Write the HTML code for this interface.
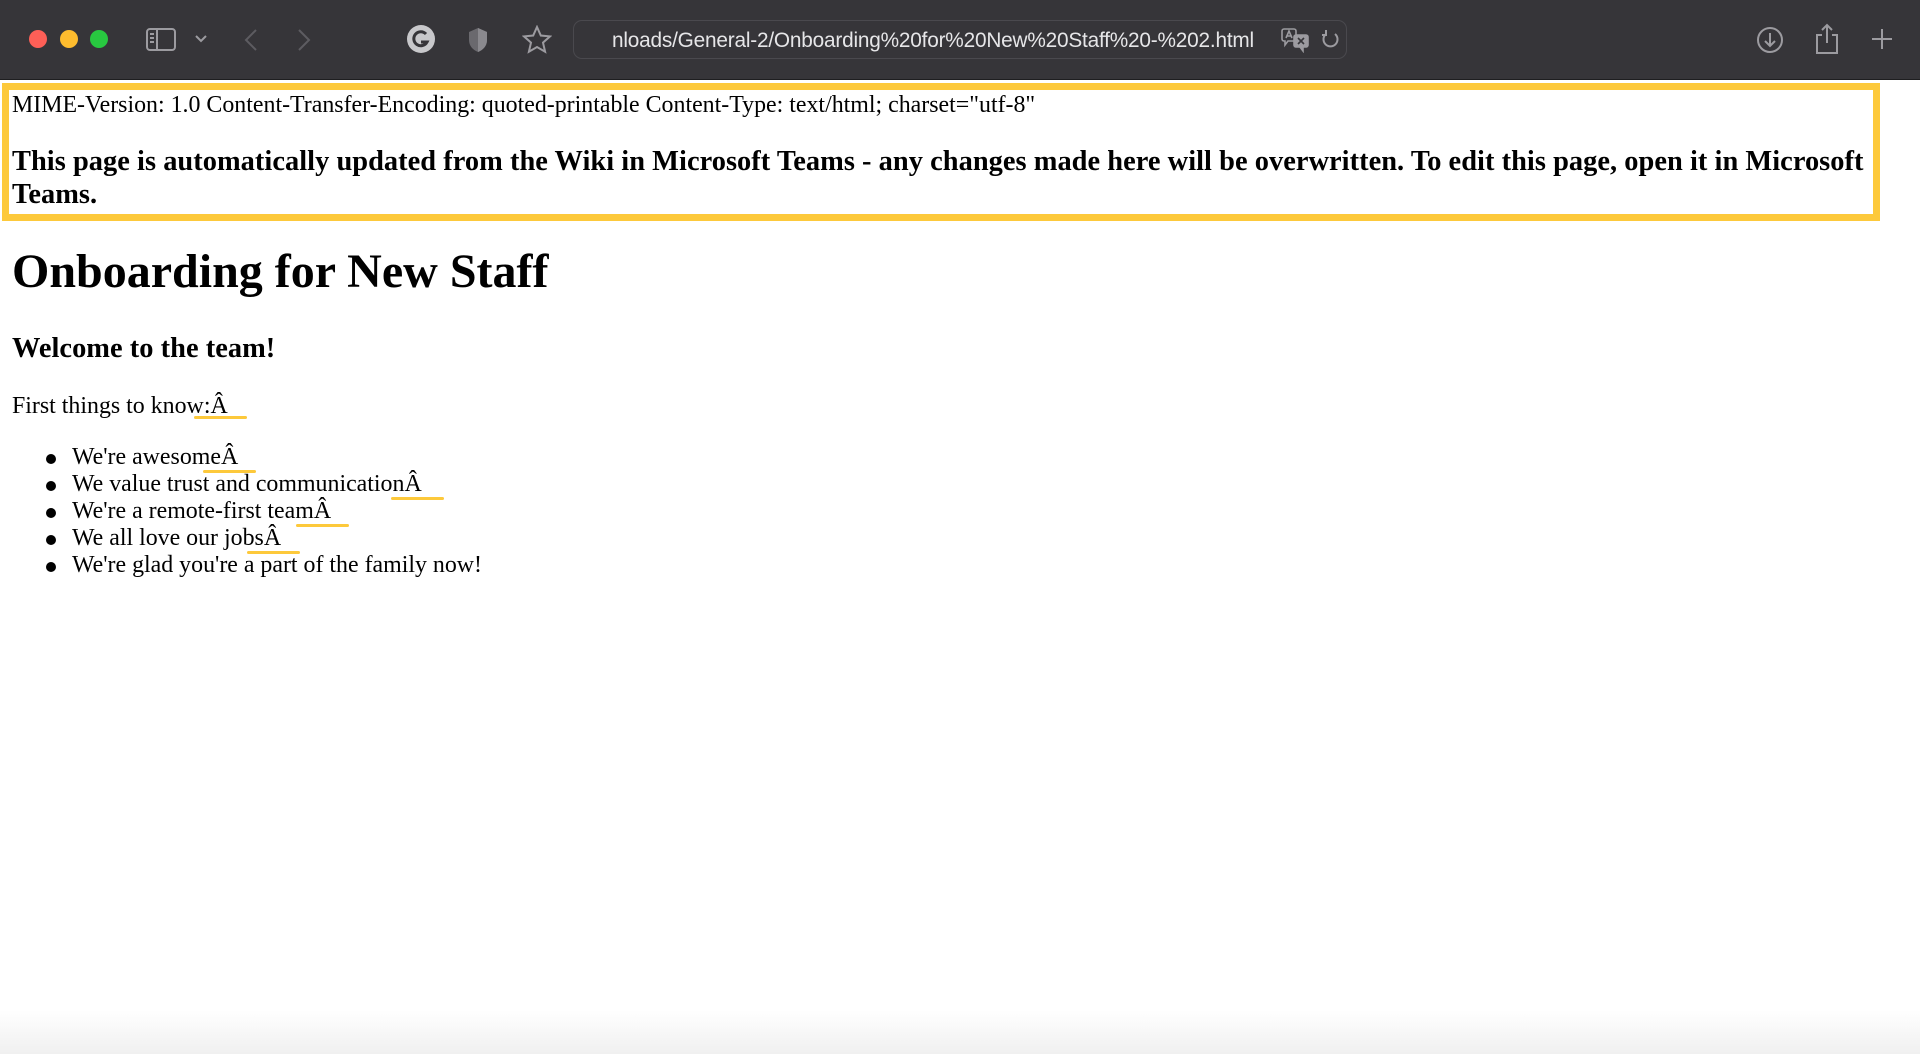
<!DOCTYPE html>
<html><head><meta charset="utf-8"><style>
*{margin:0;padding:0;box-sizing:border-box}
html,body{width:1920px;height:1054px;overflow:hidden;background:#fff}
body{position:relative;font-family:"Liberation Serif",serif;color:#000}
.bar{position:absolute;left:0;top:0;width:1920px;height:80px;background:#363539;border-bottom:1px solid #1e1e20}
.dot{position:absolute;top:30px;width:18px;height:18px;border-radius:50%}
.url{position:absolute;left:573px;top:20px;width:774px;height:39px;border:1px solid #4a494e;border-radius:9px;background:#363539}
.url span{position:absolute;left:38px;top:8px;font:20.8px "Liberation Sans",sans-serif;color:#e6e6e8;white-space:nowrap;letter-spacing:-0.2px}
.ic{position:absolute;stroke:#9c9ba0;fill:none;stroke-width:2}
.box{position:absolute;left:2px;top:83px;width:1878px;height:138px;border:7px solid #fdc93b}
.t{position:absolute;white-space:nowrap;line-height:1}
.ul{position:absolute;height:3px;background:#fdc93b;border-radius:2px;width:53px}
.b{position:absolute;left:46px;width:10px;height:10px;border-radius:50%;background:#000}
.n{font-size:23.9px}
.h3{font-size:28.4px;font-weight:bold;letter-spacing:0.04px}
</style></head><body>
<div class="bar">
<div class="dot" style="left:29px;background:#fe5f57"></div>
<div class="dot" style="left:60px;background:#febc2e"></div>
<div class="dot" style="left:90px;background:#28c840"></div>
<svg class="ic" style="left:146px;top:28px" width="30" height="24"><rect x="1" y="1" width="28" height="21" rx="3"/><line x1="11" y1="1" x2="11" y2="22"/><line x1="4" y1="6" x2="8" y2="6"/><line x1="4" y1="10" x2="8" y2="10"/><line x1="4" y1="14" x2="8" y2="14"/></svg>
<svg class="ic" style="left:194px;top:34px" width="14" height="10"><path d="M2 2l5 5 5-5"/></svg>
<svg class="ic" style="left:244px;top:28px;stroke:#5d5c61" width="14" height="24"><path d="M12 2L2 12l10 10"/></svg>
<svg class="ic" style="left:297px;top:28px;stroke:#5d5c61" width="14" height="24"><path d="M2 2l10 10L2 22"/></svg>
<svg style="position:absolute;left:406px;top:24px" width="30" height="30"><circle cx="15" cy="15" r="14" fill="#c8c8cb"/><path d="M20 10a7 7 0 1 0 1 8h-6" stroke="#363539" stroke-width="3" fill="none"/></svg>
<svg style="position:absolute;left:466px;top:26px" width="24" height="28"><path d="M12 2L3 6v8c0 6 4 10 9 12 5-2 9-6 9-12V6z" fill="#6a696e"/><path d="M12 2v24c5-2 9-6 9-12V6z" fill="#8a898e"/></svg>
<svg class="ic" style="left:522px;top:25px" width="30" height="30"><path d="M15 2l3.8 8.5 9.2.9-7 6.2 2.1 9.1L15 22l-8.1 4.7 2.1-9.1-7-6.2 9.2-.9z"/></svg>
<div class="url"><span>nloads/General-2/Onboarding%20for%20New%20Staff%20-%202.html</span></div>
<svg class="ic" style="left:1281px;top:27px;stroke-width:1.6" width="30" height="26"><path d="M3 2h10a2 2 0 0 1 2 2v8a2 2 0 0 1-2 2H7l-3 4v-4H3a2 2 0 0 1-2-2V4a2 2 0 0 1 2-2z"/><path d="M5 11l3-7 3 7M6 9h4"/><rect x="13" y="8" width="14" height="12" rx="2" fill="#9c9ba0"/><path d="M22 20v4l-3-4" fill="#9c9ba0"/><path d="M17 11l6 6M23 11l-6 6" stroke="#363539"/></svg>
<svg class="ic" style="left:1320px;top:29px" width="20" height="22"><path d="M15 5a7 7 0 1 1-9 0M6 1v5h-4" /></svg>
<svg class="ic" style="left:1756px;top:26px" width="28" height="28"><circle cx="14" cy="14" r="12"/><path d="M14 7v13M9 15l5 5 5-5"/></svg>
<svg class="ic" style="left:1814px;top:23px" width="26" height="32"><path d="M8 12H3v18h20V12h-5M13 2v18M8 7l5-5 5 5"/></svg>
<svg class="ic" style="left:1870px;top:27px" width="24" height="24"><path d="M12 2v20M2 12h20"/></svg>
</div>
<div class="box"></div>
<div class="t n" style="left:12px;top:94px">MIME-Version: 1.0 Content-Transfer-Encoding: quoted-printable Content-Type: text/html; charset="utf-8"</div>
<div class="t h3" style="left:12px;top:148px">This page is automatically updated from the Wiki in Microsoft Teams - any changes made here will be overwritten. To edit this page, open it in Microsoft</div>
<div class="t h3" style="left:12px;top:181px">Teams.</div>
<div class="t" style="left:12px;top:248px;font-size:48px;font-weight:bold">Onboarding for New Staff</div>
<div class="t h3" style="left:12px;top:335px">Welcome to the team!</div>
<div class="t n" style="left:12px;top:395px">First things to know:Â</div>
<div class="ul" style="left:194px;top:416px"></div>
<div class="b" style="top:454px"></div><div class="t n" style="left:72px;top:446px">We're awesomeÂ</div><div class="ul" style="left:203px;top:470px"></div>
<div class="b" style="top:481px"></div><div class="t n" style="left:72px;top:473px">We value trust and communicationÂ</div><div class="ul" style="left:391px;top:497px"></div>
<div class="b" style="top:508px"></div><div class="t n" style="left:72px;top:500px">We're a remote-first teamÂ</div><div class="ul" style="left:296px;top:524px"></div>
<div class="b" style="top:535px"></div><div class="t n" style="left:72px;top:527px">We all love our jobsÂ</div><div class="ul" style="left:247px;top:551px"></div>
<div class="b" style="top:562px"></div><div class="t n" style="left:72px;top:554px">We're glad you're a part of the family now!</div>
<div style="position:absolute;left:0;top:1010px;width:1920px;height:44px;background:linear-gradient(#fff,#f0f0f0)"></div>
</body></html>
